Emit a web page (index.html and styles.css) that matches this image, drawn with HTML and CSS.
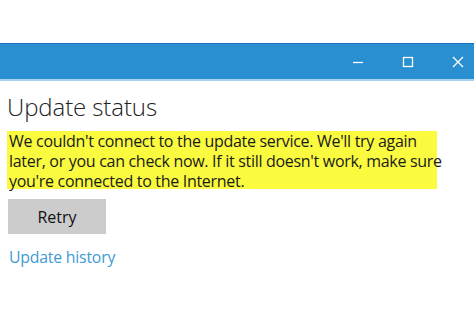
FILE: index.html
```html
<!DOCTYPE html>
<html>
<head>
<meta charset="utf-8">
<link rel="stylesheet" href="styles.css">
</head>
<body>
<div class="top"></div>
<div class="titlebar">
  <div class="controls">
    <span class="ctl"><svg width="12" height="12" viewBox="0 0 12 12"><line x1="1" y1="6.5" x2="11" y2="6.5" stroke="#fff" stroke-width="1.3"/></svg></span>
    <span class="ctl"><svg width="12" height="12" viewBox="0 0 12 12"><rect x="1.5" y="1.5" width="9" height="9" fill="none" stroke="#fff" stroke-width="1.3"/></svg></span>
    <span class="ctl"><svg width="12" height="12" viewBox="0 0 12 12"><path d="M1 1L11 11M11 1L1 11" stroke="#fff" stroke-width="1.3"/></svg></span>
  </div>
</div>
<div class="content">
  <h1 class="title">Update status</h1>
  <p class="msg">We couldn't connect to the update service. We'll try again<br>later, or you can check now. If it still doesn't work, make sure<br>you're connected to the Internet.</p>
  <button class="retry">Retry</button>
  <a class="link" href="#">Update history</a>
</div>
</body>
</html>
```
FILE: styles.css
```css
html, body { margin: 0; padding: 0; background: #fff; }
body { font-family: "Open Sans", "Noto Sans", sans-serif; color: #1a1a1a; width: 474px; height: 316px; overflow: hidden; }
.top { height: 43px; }
.titlebar {
  height: 35px;
  background: #2a8fd0;
  border-top: 1px solid #1d74c2;
  border-bottom: 2px solid #a9d4f0;
  display: flex;
  justify-content: flex-end;
  align-items: center;
  padding-right: 10px;
}
.controls { display: flex; align-items: center; gap: 38px; }
.ctl { width: 12px; height: 12px; display: flex; }
.content { padding-left: 7px; display: flex; flex-direction: column; align-items: flex-start; }
.title { font-weight: 300; font-size: 24px; margin: 10px 0 0 0; line-height: 31px; color: #222; letter-spacing: -0.1px; }
.msg {
  margin: 9px 0 0 0;
  background: #fafa3e;
  width: 428px;
  padding: 0 0 0 2px;
  font-size: 16px;
  line-height: 20px;
  height: 58px;
  letter-spacing: -0.3px;
  color: #1b1b1b;
  white-space: nowrap;
}
.retry {
  margin: 10px 0 0 1px;
  width: 98px;
  height: 35px;
  background: #cccccc;
  border: none;
  font-family: inherit;
  font-size: 16px;
  color: #111;
  padding: 0;
}
.link {
  margin: 12px 0 0 2px;
  color: #3d9bd5;
  text-decoration: none;
  font-size: 15.8px;
  letter-spacing: -0.2px;
}
```
